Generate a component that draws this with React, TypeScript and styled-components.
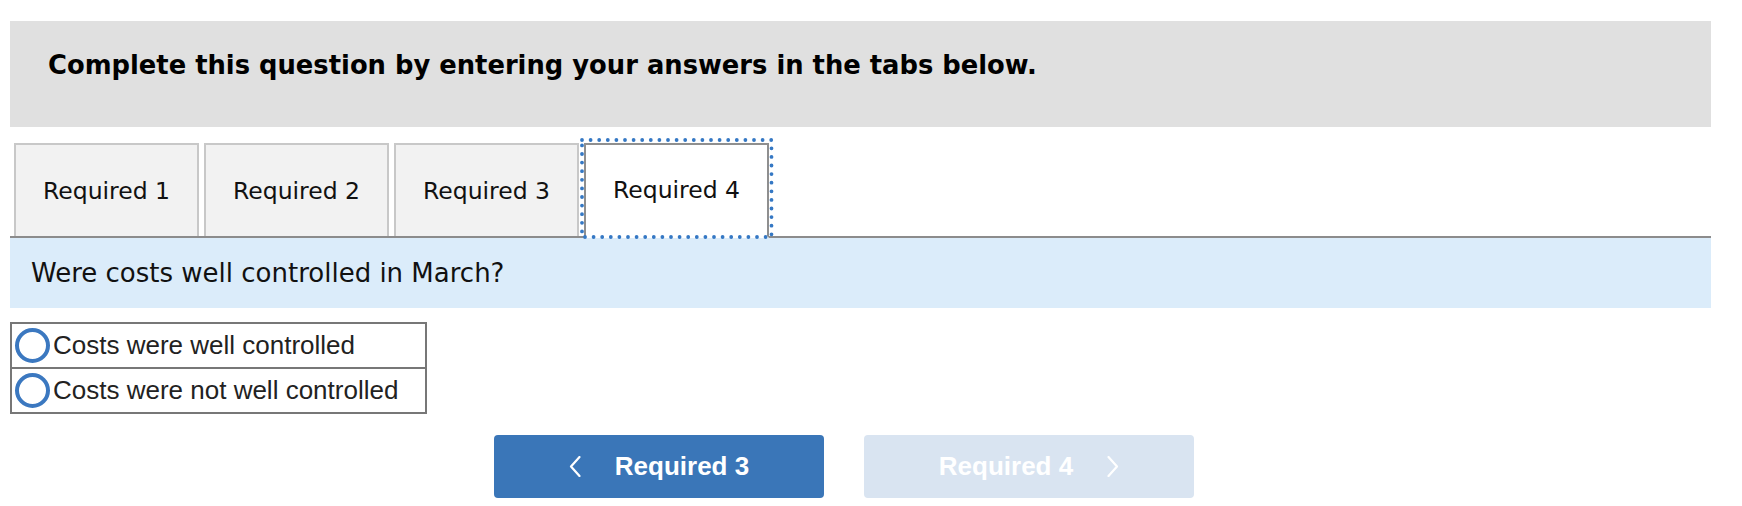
import * as React from 'react';
import styled, { createGlobalStyle } from 'styled-components';

const GlobalStyle = createGlobalStyle`
  body {
    margin: 0;
    background: #ffffff;
  }
`;

const Page = styled.div`
  width: 1701px;
  padding: 21px 0 0 10px;
  font-family: 'DejaVu Sans', Verdana, sans-serif;
`;

const Instructions = styled.div`
  display: flex;
  align-items: center;
  height: 106px;
  padding: 0 0 18px 38px;
  box-sizing: border-box;
  background: #e0e0e0;
  color: #000;
  font-size: 25.8px;
  font-weight: bold;
`;

const TabList = styled.div`
  display: flex;
  align-items: flex-start;
  gap: 5px;
  height: 93px;
  margin-top: 16px;
  padding-left: 4px;
  border-bottom: 2px solid #8c8c8c;
`;

const Tab = styled.button<{ $active?: boolean }>`
  position: relative;
  flex: none;
  display: flex;
  align-items: center;
  justify-content: center;
  width: 185px;
  height: ${(p) => (p.$active ? '95px' : '93px')};
  padding: 0 0 ${(p) => (p.$active ? '2px' : '0')};
  border: 2px solid ${(p) => (p.$active ? '#8f8f8f' : '#c8c8c8')};
  border-bottom: ${(p) => (p.$active ? '2px solid #ffffff' : 'none')};
  background: ${(p) => (p.$active ? '#ffffff' : '#f2f2f2')};
  color: #111;
  font-family: 'DejaVu Sans', Verdana, sans-serif;
  font-size: 23.5px;
  outline: none;
  cursor: pointer;
`;

// dotted focus ring drawn over the active tab
const FocusRing = styled.svg`
  position: absolute;
  top: -5px;
  left: -4px;
  width: calc(100% + 8.5px);
  height: calc(100% + 6px);
  overflow: visible;
  pointer-events: none;
`;

const Question = styled.div`
  display: flex;
  align-items: center;
  height: 70px;
  padding-left: 21px;
  background: #dbecfa;
  color: #111;
  font-size: 26px;
`;

const Choices = styled.div`
  width: 417px;
  margin-top: 14px;
  border: 2px solid #777;
  box-sizing: border-box;
`;

const Choice = styled.label`
  display: flex;
  align-items: center;
  height: 43px;
  padding-left: 3px;
  font-family: 'Liberation Sans', Arial, sans-serif;
  font-size: 26px;
  color: #222;
  cursor: pointer;

  & + & {
    border-top: 2px solid #777;
  }
`;

const Radio = styled.span`
  flex: none;
  width: 35px;
  height: 35px;
  margin-right: 3px;
  border: 4px solid #3b78c0;
  border-radius: 50%;
  box-sizing: border-box;
  background: #fff;
`;

const NavRow = styled.div`
  display: flex;
  gap: 40px;
  margin-top: 21px;
  padding-left: 484px;
`;

const NavButton = styled.button<{ $disabled?: boolean }>`
  display: flex;
  align-items: center;
  justify-content: center;
  gap: 34px;
  width: 330px;
  height: 63px;
  border: none;
  border-radius: 4px;
  background: ${(p) => (p.$disabled ? '#d9e4f1' : '#3a76b8')};
  color: #ffffff;
  font-family: 'Liberation Sans', Arial, sans-serif;
  font-size: 26px;
  font-weight: bold;
  cursor: ${(p) => (p.$disabled ? 'default' : 'pointer')};
`;

const Chevron = ({ dir }: { dir: 'left' | 'right' }) => (
  <svg width="12" height="21" viewBox="0 0 12 21" fill="none">
    <polyline
      points={dir === 'left' ? '10.5,1 2,10.5 10.5,20' : '1.5,1 10,10.5 1.5,20'}
      stroke="#ffffff"
      strokeWidth="2.2"
      strokeLinecap="round"
      strokeLinejoin="round"
    />
  </svg>
);

const tabs = ['Required 1', 'Required 2', 'Required 3', 'Required 4'];
const choices = ['Costs were well controlled', 'Costs were not well controlled'];

export default function App() {
  const active = 3;

  return (
    <Page>
      <GlobalStyle />
      <Instructions>Complete this question by entering your answers in the tabs below.</Instructions>
      <TabList>
        {tabs.map((t, i) => (
          <Tab key={t} $active={i === active}>
            {t}
            {i === active && (
              <FocusRing>
                <rect
                  x="0"
                  y="0"
                  width="100%"
                  height="100%"
                  fill="none"
                  stroke="#3578c4"
                  strokeWidth="3.8"
                  strokeDasharray="0 8.6"
                  strokeLinecap="round"
                />
              </FocusRing>
            )}
          </Tab>
        ))}
      </TabList>
      <Question>Were costs well controlled in March?</Question>
      <Choices>
        {choices.map((c) => (
          <Choice key={c}>
            <Radio />
            {c}
          </Choice>
        ))}
      </Choices>
      <NavRow>
        <NavButton>
          <Chevron dir="left" />
          Required 3
        </NavButton>
        <NavButton $disabled>
          Required 4
          <Chevron dir="right" />
        </NavButton>
      </NavRow>
    </Page>
  );
}
